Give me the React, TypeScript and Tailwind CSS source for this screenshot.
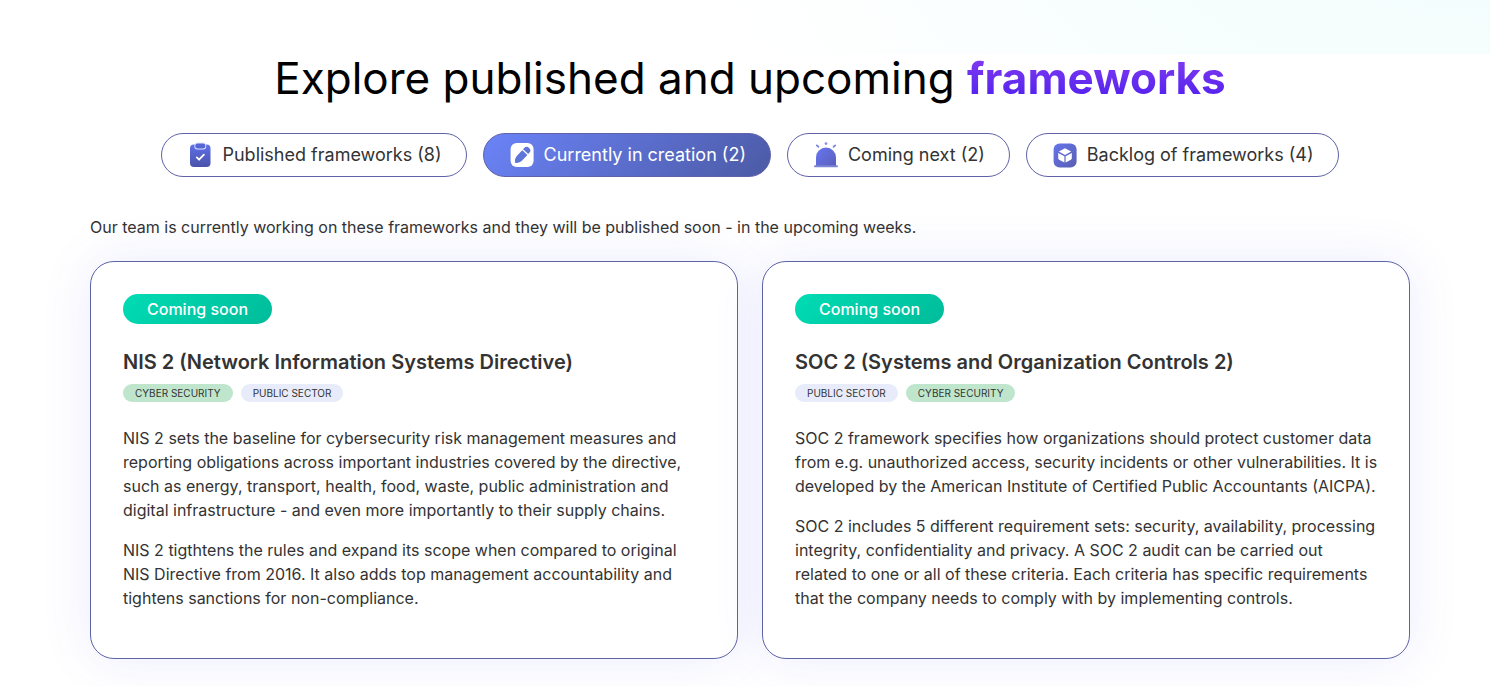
import { useState } from "react";

function ClipboardIcon() {
  return (
    <svg className="size-7 shrink-0" viewBox="0 0 28 28" fill="none" aria-hidden="true">
      <defs>
        <linearGradient id="clipboard-fill" x1="14" y1="4" x2="14" y2="26" gradientUnits="userSpaceOnUse">
          <stop stopColor="#5f70e8" />
          <stop offset="1" stopColor="#4a52a8" />
        </linearGradient>
      </defs>
      <rect x="4" y="3.5" width="20.5" height="22.5" rx="4" fill="url(#clipboard-fill)" />
      <rect x="8.4" y="1.6" width="11.8" height="6.8" rx="3" fill="#dfe3ff" />
      <rect x="9.3" y="2.4" width="10" height="5" rx="2.2" fill="#5666d6" />
      <path d="M10.8 16.4l2.3 2.3 4.8-5" stroke="#fff" strokeWidth="1.8" strokeLinecap="round" strokeLinejoin="round" />
    </svg>
  );
}

function PencilIcon() {
  return (
    <svg className="size-7 shrink-0" viewBox="0 0 28 28" fill="none" aria-hidden="true">
      <rect x="2.6" y="2" width="23" height="24" rx="6" fill="#fff" />
      <g transform="translate(14.5 14) rotate(43)" fill="#5d74d8">
        <path d="M-3.500-4.600V-6.200a3.500 3.500 0 0 1 7 0v1.600z" />
        <path d="M-3.500-3.400h7V4c0 2.600-1.100 4.600-2.500 6-.6.600-1.400.6-2 0C-2.400 8.600-3.500 6.600-3.500 4z" />
      </g>
    </svg>
  );
}

function SirenIcon() {
  return (
    <svg className="size-7 shrink-0" viewBox="0 0 28 28" fill="none" aria-hidden="true">
      <defs>
        <linearGradient id="siren-fill" x1="5" y1="8" x2="24" y2="26" gradientUnits="userSpaceOnUse">
          <stop stopColor="#6674ee" />
          <stop offset="1" stopColor="#5a5fb8" />
        </linearGradient>
      </defs>
      <path d="M4 25V16.5a10 10 0 0 1 20 0V25z" fill="url(#siren-fill)" />
      <rect x="2" y="24.3" width="24" height="2" rx="1" fill="#7c84d6" />
      <circle cx="14" cy="2.6" r="1.4" fill="#8790e8" />
      <path d="M4.8 4.4l1.6 1.4M23.2 4.4l-1.6 1.4" stroke="#7a84e2" strokeWidth="1.8" strokeLinecap="round" />
    </svg>
  );
}

function BoxIcon() {
  return (
    <svg className="size-7 shrink-0" viewBox="0 0 28 28" fill="none" aria-hidden="true">
      <defs>
        <linearGradient id="box-fill" x1="3" y1="3" x2="26" y2="26" gradientUnits="userSpaceOnUse">
          <stop stopColor="#6474ec" />
          <stop offset="1" stopColor="#5a5eb0" />
        </linearGradient>
      </defs>
      <rect x="2.6" y="2.4" width="23" height="24" rx="6" fill="url(#box-fill)" />
      <path d="M14 7.200l6.200 3.400-6.200 3.400-6.200-3.400z" fill="#fff" />
      <path d="M7.200 11.900l6.200 3.300v6.400l-5.300-2.900c-.6-.3-.9-.9-.9-1.500z" fill="#fff" />
      <path d="M20.800 11.900l-6.200 3.300v6.400l5.300-2.900c.6-.3.900-.9.900-1.500z" fill="#fff" />
    </svg>
  );
}

const tabs = [
  { label: "Published frameworks (8)", icon: ClipboardIcon },
  { label: "Currently in creation (2)", icon: PencilIcon },
  { label: "Coming next (2)", icon: SirenIcon },
  { label: "Backlog of frameworks (4)", icon: BoxIcon },
];

const tagColors: Record<string, string> = {
  "Cyber security": "bg-[#bfe6cd]",
  "Public sector": "bg-[#e8ebf9]",
};

const frameworks = [
  {
    title: "NIS 2 (Network Information Systems Directive)",
    tags: ["Cyber security", "Public sector"],
    paragraphs: [
      "NIS 2 sets the baseline for cybersecurity risk management measures and reporting obligations across important industries covered by the directive, such as energy, transport, health, food, waste, public administration and digital infrastructure - and even more importantly to their supply chains.",
      "NIS 2 tigthtens the rules and expand its scope when compared to original NIS Directive from 2016. It also adds top management accountability and tightens sanctions for non-compliance.",
    ],
  },
  {
    title: "SOC 2 (Systems and Organization Controls 2)",
    tags: ["Public sector", "Cyber security"],
    paragraphs: [
      "SOC 2 framework specifies how organizations should protect customer data from e.g. unauthorized access, security incidents or other vulnerabilities. It is developed by the American Institute of Certified Public Accountants (AICPA).",
      "SOC 2 includes 5 different requirement sets: security, availability, processing integrity, confidentiality and privacy. A SOC 2 audit can be carried out related to one or all of these criteria. Each criteria has specific requirements that the company needs to comply with by implementing controls.",
    ],
  },
];

function FrameworkCard({ title, tags, paragraphs }: (typeof frameworks)[number]) {
  return (
    <article className="rounded-3xl border border-[#5f62a8] bg-white py-8 pr-[31px] pl-8 shadow-[0_0_50px_rgba(93,95,239,0.12)]">
      <span className="inline-block rounded-full bg-linear-135 from-[#00dcb4] to-[#00bc9a] px-6 py-[3px] align-top text-base font-medium text-white">
        Coming soon
      </span>
      <h2 className="mt-6 text-xl font-semibold">{title}</h2>
      <ul className="mt-2 flex flex-wrap gap-2">
        {tags.map((tag) => (
          <li key={tag} className={`rounded-full px-3 text-[10px] leading-[18px] uppercase ${tagColors[tag]}`}>
            {tag}
          </li>
        ))}
      </ul>
      <div className="mt-6">
        {paragraphs.map((text) => (
          <p key={text} className="mb-4">
            {text}
          </p>
        ))}
      </div>
    </article>
  );
}

export default function App() {
  const [active, setActive] = useState(1);

  return (
    <div className="overflow-x-hidden bg-white font-[Inter,sans-serif] text-base text-[#333]">
      {/* End of the hero background */}
      <div className="h-[54px] bg-[radial-gradient(circle_at_100%_-400px,#f4fdfd_400px,#ffffff_860px)]" />

      <main className="pr-20 pb-7 pl-[90px]">
        <h1 className="text-center text-[44px] leading-12 text-black">
          Explore published and upcoming{" "}
          <span className="bg-linear-to-b from-[#8a3bf0] to-[#4a17ee] bg-clip-text font-bold text-transparent">
            frameworks
          </span>
        </h1>

        <div role="tablist" aria-label="Frameworks" className="mt-[31px] flex flex-wrap justify-center gap-4">
          {tabs.map(({ label, icon: Icon }, index) => (
            <button
              key={label}
              type="button"
              role="tab"
              aria-selected={index === active}
              onClick={() => setActive(index)}
              className={`flex h-11 cursor-pointer items-center gap-2 rounded-full border border-[#5f62a8] px-6 text-lg ${
                index === active ? "bg-linear-135 from-[#6b83f8] to-[#4c5aa5] text-white" : "bg-white"
              }`}
            >
              <Icon />
              {label}
            </button>
          ))}
        </div>

        <p className="mt-[38px]">
          Our team is currently working on these frameworks and they will be published soon - in the upcoming weeks.
        </p>

        <div className="mt-[22px] grid gap-6 md:grid-cols-2">
          {frameworks.map((framework) => (
            <FrameworkCard key={framework.title} {...framework} />
          ))}
        </div>
      </main>
    </div>
  );
}
